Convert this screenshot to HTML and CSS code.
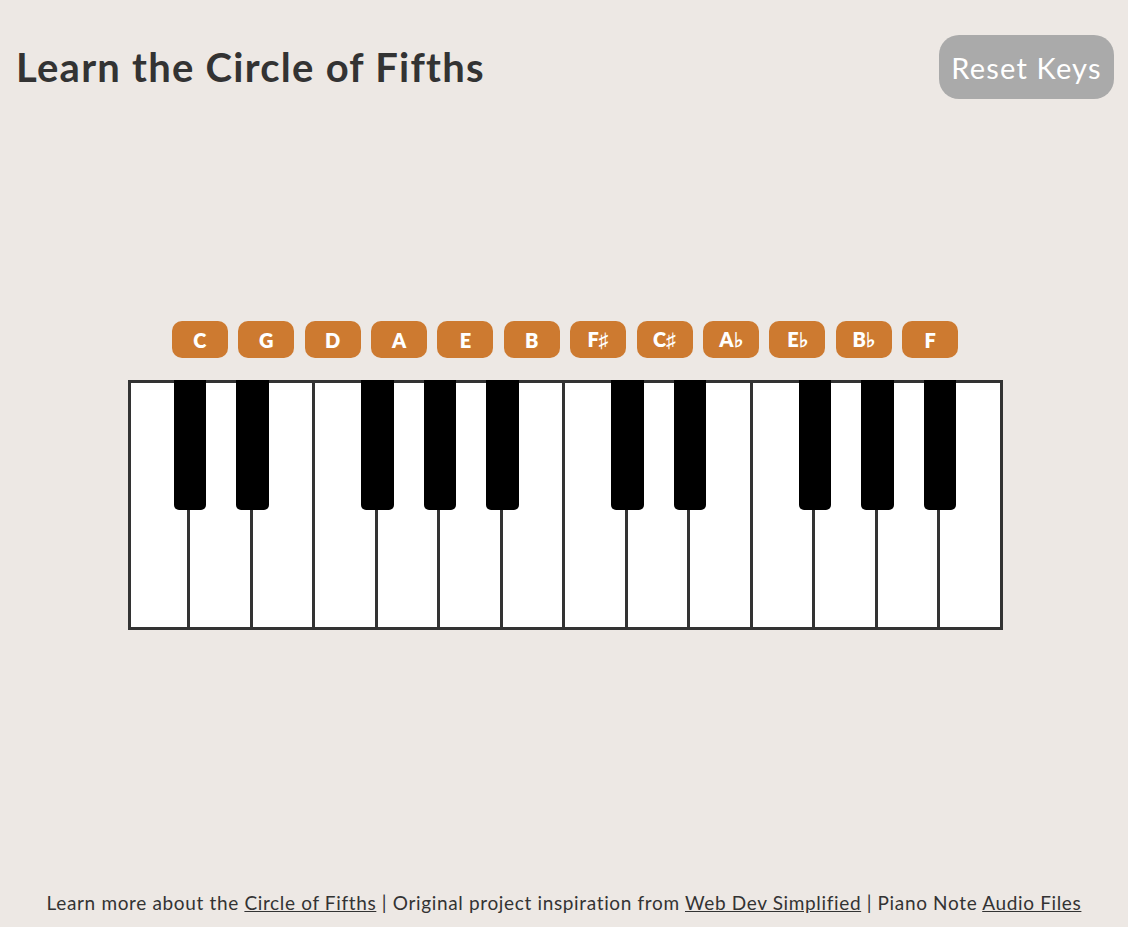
FILE: index.html
```html
<!DOCTYPE html>
<html lang="en">
<head>
<meta charset="utf-8">
<title>Learn the Circle of Fifths</title>
<link rel="stylesheet" href="styles.css">
</head>
<body>
<header class="header">
  <h1 class="title">Learn the Circle of Fifths</h1>
  <button class="reset">Reset Keys</button>
</header>
<main class="main">
  <div class="notes">
    <button class="note">C</button>
    <button class="note">G</button>
    <button class="note">D</button>
    <button class="note">A</button>
    <button class="note">E</button>
    <button class="note">B</button>
    <button class="note">F♯</button>
    <button class="note">C♯</button>
    <button class="note">A♭</button>
    <button class="note">E♭</button>
    <button class="note">B♭</button>
    <button class="note">F</button>
  </div>
  <div class="piano">
    <div class="key white first"></div>
    <div class="key black"></div>
    <div class="key white"></div>
    <div class="key black"></div>
    <div class="key white"></div>
    <div class="key white"></div>
    <div class="key black"></div>
    <div class="key white"></div>
    <div class="key black"></div>
    <div class="key white"></div>
    <div class="key black"></div>
    <div class="key white"></div>
    <div class="key white"></div>
    <div class="key black"></div>
    <div class="key white"></div>
    <div class="key black"></div>
    <div class="key white"></div>
    <div class="key white"></div>
    <div class="key black"></div>
    <div class="key white"></div>
    <div class="key black"></div>
    <div class="key white"></div>
    <div class="key black"></div>
    <div class="key white"></div>
  </div>
</main>
<footer class="footer">
  Learn more about the <a href="#">Circle of Fifths</a> | Original project inspiration from <a href="#">Web Dev Simplified</a> | Piano Note <a href="#">Audio Files</a>
</footer>
</body>
</html>
```
FILE: styles.css
```css
* { box-sizing: border-box; }
html, body { margin: 0; padding: 0; }
body {
  background: #ede8e4;
  color: #333;
  font-family: "Lato", "Noto Sans", sans-serif;
  min-height: 100vh;
  display: flex;
  flex-direction: column;
}
.header {
  display: flex;
  justify-content: space-between;
  align-items: center;
  padding: 35px 14px 0 16px;
}
.title {
  margin: 0;
  font-size: 40px;
  font-weight: 700;
  color: #333;
  line-height: 1;
  letter-spacing: 1.25px;
}
.reset {
  width: 175px;
  height: 64px;
  border: none;
  border-radius: 20px;
  background: #aaaaaa;
  color: #fff;
  font-family: "Lato", "Noto Sans", sans-serif;
  font-size: 29px;
  letter-spacing: 1.2px;
  padding: 0;
}
.main {
  flex: 1;
  display: flex;
  flex-direction: column;
  align-items: center;
  padding-top: 222px;
}
.notes {
  display: flex;
  gap: 10.4px;
  margin-bottom: 22px;
  margin-left: 2px;
}
.note {
  width: 56px;
  height: 37px;
  border: none;
  border-radius: 10px;
  background: #cd7a30;
  color: #fff;
  font-family: "Lato", "Noto Sans", sans-serif;
  font-weight: 800;
  font-size: 20px;
  padding: 0;
}
.piano {
  display: flex;
  height: 250px;
  border: 3px solid #333;
  border-left: none;
  margin-left: 3px;
}
.key.white {
  width: 62.5px;
  background: #fff;
  border-left: 3px solid #333;
  flex-shrink: 0;
}
.key.white.first { width: 59px; }
.key.black {
  width: 32.5px;
  height: 130px;
  margin: -3px -19px 0 -13.5px;
  background: #000;
  border-radius: 0 0 5px 5px;
  z-index: 2;
  flex-shrink: 0;
}
.footer {
  text-align: center;
  font-size: 19px;
  letter-spacing: 0.65px;
  padding-bottom: 13px;
  color: #333;
}
.footer a { color: #333; }
```
